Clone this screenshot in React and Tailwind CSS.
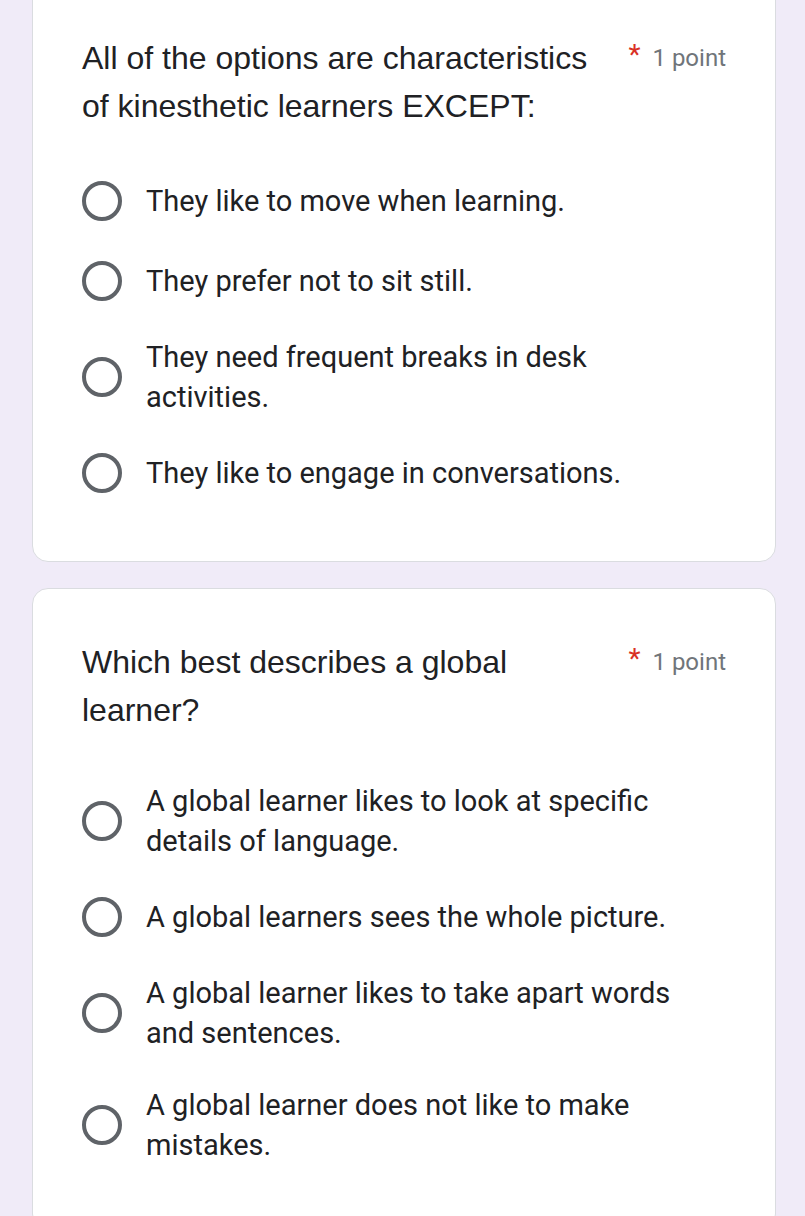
import React from "react";

const questions = [
  {
    title: "All of the options are characteristics of kinesthetic learners EXCEPT:",
    options: [
      "They like to move when learning.",
      "They prefer not to sit still.",
      "They need frequent breaks in desk activities.",
      "They like to engage in conversations.",
    ],
  },
  {
    title: "Which best describes a global learner?",
    options: [
      "A global learner likes to look at specific details of language.",
      "A global learners sees the whole picture.",
      "A global learner likes to take apart words and sentences.",
      "A global learner does not like to make mistakes.",
    ],
  },
];

function Radio() {
  return (
    <div className="w-[40px] h-[48px] shrink-0 flex items-center justify-center">
      <div className="w-[40px] h-[40px] rounded-full border-[4px] border-[#5f6368]" />
    </div>
  );
}

function QuestionCard({ q, first }) {
  return (
    <div
      className={
        "bg-white border border-[#dadce0] rounded-[16px] pl-[49px] pr-[49px] pt-[49px] pb-[64px] " +
        (first ? "-mt-[16px]" : "")
      }
    >
      <div className="flex items-start gap-[14px]">
        <div
          className="flex-1 text-[32px] leading-[48px] text-[#202124]"
          style={{ fontFamily: '"Liberation Sans", Arial, sans-serif' }}
        >
          {q.title}
        </div>
        <div
          className="shrink-0 flex items-start pt-[7px]"
          style={{ fontFamily: "Roboto, sans-serif" }}
        >
          <span className="text-[#d93025] text-[28px] leading-[28px] mr-[12px]">*</span>
          <span className="text-[#70757a] text-[24px] leading-[34px]">1 point</span>
        </div>
      </div>
      <div className="mt-[47px] flex flex-col gap-[32px]">
        {q.options.map((o) => (
          <div key={o} className="flex items-center gap-[24px]">
            <Radio />
            <div
              className="flex-1 text-[29px] leading-[40px] text-[#202124] pr-[40px]"
              style={{ fontFamily: "Roboto, sans-serif" }}
            >
              {o}
            </div>
          </div>
        ))}
      </div>
    </div>
  );
}

export default function App() {
  return (
    <div className="w-[805px] h-[1216px] overflow-hidden bg-[#f0ebf8] pl-[32px] pr-[29px]">
      <div className="flex flex-col gap-[26px]">
        {questions.map((q, i) => (
          <QuestionCard key={i} q={q} first={i === 0} />
        ))}
      </div>
    </div>
  );
}
